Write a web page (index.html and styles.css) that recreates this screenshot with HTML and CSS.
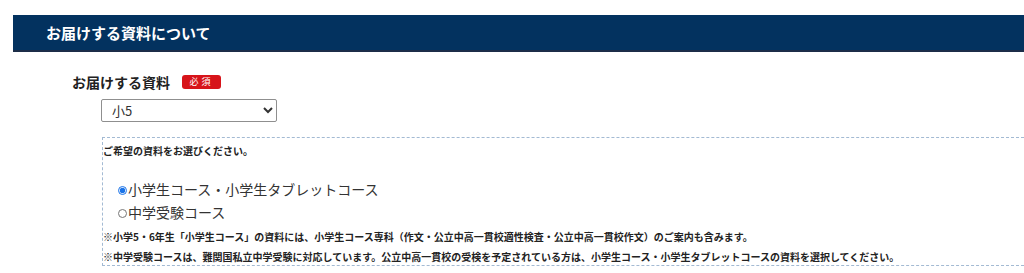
FILE: index.html
```html
<!DOCTYPE html>
<html lang="ja">
<head>
    <meta charset="UTF-8">
    <meta name="viewport" content="width=device-width, initial-scale=1.0">
    <title>お届けする資料について</title>
    <link rel="stylesheet" href="styles.css">
</head>
<body>
    <section class="section">
        <h2 class="section-title">お届けする資料について</h2>

        <div class="field">
            <div class="field-label">
                <span>お届けする資料</span>
                <span class="required">必須</span>
            </div>
            <select class="grade-select">
                <option>小5</option>
                <option>小6</option>
            </select>

            <div class="choice-box">
                <p class="choice-lead">ご希望の資料をお選びください。</p>
                <ul class="choice-list">
                    <li><label><input type="radio" name="course" checked>小学生コース・小学生タブレットコース</label></li>
                    <li><label><input type="radio" name="course">中学受験コース</label></li>
                </ul>
                <p class="note">※小学5・6年生「小学生コース」の資料には、小学生コース専科（作文・公立中高一貫校適性検査・公立中高一貫校作文）のご案内も含みます。</p>
                <p class="note">※中学受験コースは、難関国私立中学受験に対応しています。公立中高一貫校の受検を予定されている方は、小学生コース・小学生タブレットコースの資料を選択してください。</p>
            </div>
        </div>
    </section>
</body>
</html>
```
FILE: styles.css
```css
:root {
    --navy: #03325f;
    --text-color: #222;
    --red: #d7141a;
    --dot-color: #a3bad3;
}

body {
    margin: 0;
    font-family: "Noto Sans CJK JP", "Noto Sans", sans-serif;
    color: var(--text-color);
    background: #fff;
    overflow: hidden;
}

.section {
    padding: 15px 0 0 13px;
}

.section-title {
    margin: 0;
    height: 35px;
    line-height: 35px;
    padding-left: 33px;
    background-color: var(--navy);
    border-bottom: 2px solid #1c2d48;
    color: #fff;
    font-size: 15px;
    font-weight: bold;
}

.field-label {
    display: flex;
    align-items: center;
    gap: 12px;
    margin-top: 22px;
    padding-left: 59px;
    font-size: 14px;
    font-weight: bold;
    line-height: 16px;
}

.required {
    display: inline-block;
    width: 39px;
    height: 14px;
    line-height: 14px;
    text-align: center;
    background-color: var(--red);
    color: #fff;
    font-size: 9px;
    font-weight: normal;
    letter-spacing: 3px;
    border-radius: 3px;
}

.grade-select {
    display: block;
    margin: 9px 0 0 88px;
    width: 176px;
    height: 23px;
    padding: 0 6px;
    font-family: inherit;
    font-size: 13px;
    color: #333;
    background: #fff;
    border: 1px solid #8f8f8f;
    border-radius: 2px;
}

.choice-box {
    margin: 15px 0 0 89px;
    height: 129px;
    border: 1px dashed var(--dot-color);
    border-right: none;
    box-sizing: border-box;
    padding-top: 5px;
}

.choice-lead {
    margin: 0;
    font-size: 10px;
    font-weight: bold;
    line-height: 16px;
}

.choice-list {
    list-style: none;
    margin: 19px 0 0;
    padding-left: 15px;
    font-size: 14px;
    line-height: 23px;
    color: #333;
}

.choice-list label {
    display: flex;
    align-items: center;
}

.choice-list input {
    width: 9px;
    height: 9px;
    margin: 1px 1px 0 0;
    accent-color: #1a73e8;
}

.note {
    margin: 0;
    font-size: 10px;
    font-weight: bold;
    line-height: 20px;
}

.choice-list + .note {
    margin-top: 3px;
}
```
